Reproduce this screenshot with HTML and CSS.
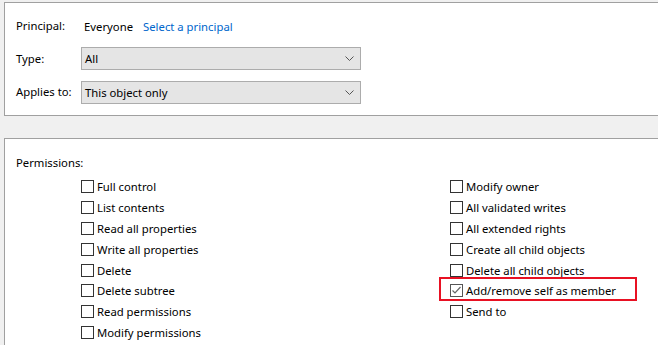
FILE: index.html
```html
<!DOCTYPE html>
<html>
<head>
<meta charset="utf-8">
<link rel="stylesheet" href="styles.css">
</head>
<body>
<div class="panel top">
  <div class="form">
    <div class="label">Principal:</div>
    <div class="value"><span class="who">Everyone</span><a class="link">Select a principal</a></div>
    <div class="label">Type:</div>
    <div class="select"><span>All</span><svg class="chev" width="9" height="5" viewBox="0 0 9 5"><polyline points="0.5,0.5 4.5,4.5 8.5,0.5" fill="none" stroke="#555" stroke-width="1"/></svg></div>
    <div class="label">Applies to:</div>
    <div class="select"><span>This object only</span><svg class="chev" width="9" height="5" viewBox="0 0 9 5"><polyline points="0.5,0.5 4.5,4.5 8.5,0.5" fill="none" stroke="#555" stroke-width="1"/></svg></div>
  </div>
</div>
<div class="panel bottom">
  <div class="perm-label">Permissions:</div>
  <div class="cols">
    <div class="col left">
      <div class="item"><span class="box"></span>Full control</div>
      <div class="item"><span class="box"></span>List contents</div>
      <div class="item"><span class="box"></span>Read all properties</div>
      <div class="item"><span class="box"></span>Write all properties</div>
      <div class="item"><span class="box"></span>Delete</div>
      <div class="item"><span class="box"></span>Delete subtree</div>
      <div class="item"><span class="box"></span>Read permissions</div>
      <div class="item"><span class="box"></span>Modify permissions</div>
    </div>
    <div class="col right">
      <div class="item"><span class="box"></span>Modify owner</div>
      <div class="item"><span class="box"></span>All validated writes</div>
      <div class="item"><span class="box"></span>All extended rights</div>
      <div class="item"><span class="box"></span>Create all child objects</div>
      <div class="item"><span class="box"></span>Delete all child objects</div>
      <div class="item highlight"><span class="box checked"><svg width="11" height="11" viewBox="0 0 11 11"><polyline points="1.5,5.5 4,8 9.5,2" fill="none" stroke="#666" stroke-width="1.2"/></svg></span>Add/remove self as member</div>
      <div class="item"><span class="box"></span>Send to</div>
    </div>
  </div>
</div>
</body>
</html>
```
FILE: styles.css
```css
html, body {
  margin: 0;
  padding: 0;
  background: #f0f0f0;
  font-family: "Noto Sans", "Open Sans", sans-serif;
  font-size: 11.3px;
  color: #000;
  overflow: hidden;
  height: 345px;
}
.panel {
  background: #fff;
  border: 1px solid #a0a0a0;
  border-right: none;
  margin-left: 4px;
}
.top {
  margin-top: 2px;
  height: 112px;
  box-sizing: content-box;
}
.form {
  display: grid;
  grid-template-columns: 65px 280px;
  grid-template-rows: 23px 23px 23px;
  row-gap: 10px;
  padding: 11px 0 0 11px;
  align-items: center;
}
.value {
  display: flex;
  align-items: center;
  gap: 10px;
  padding-left: 3px;
  margin-top: 1px;
}
.link {
  color: #0066cc;
}
.select {
  height: 23px;
  box-sizing: border-box;
  border: 1px solid #acacac;
  background: #e5e5e5;
  display: flex;
  align-items: center;
  justify-content: space-between;
  padding: 0 6px 0 3px;
}
.select:last-child {
  margin-top: 1px;
}
.chev {
  display: block;
}
.bottom {
  margin-top: 22px;
  border-bottom: none;
  height: 206px;
  padding-top: 13px;
}
.perm-label {
  padding-left: 11px;
  height: 21px;
  line-height: 21px;
}
.cols {
  display: flex;
  margin-top: 3px;
  padding-left: 76px;
}
.col.left {
  width: 369px;
}
.item {
  height: 20.9px;
  display: flex;
  align-items: center;
  position: relative;
}
.box {
  width: 13px;
  height: 13px;
  box-sizing: border-box;
  border: 1px solid #333;
  background: #fff;
  margin-right: 3px;
  flex: none;
  display: flex;
  align-items: center;
  justify-content: center;
}
.box.checked {
  border-color: #555;
}
.box svg {
  display: block;
}
.highlight::before {
  content: "";
  position: absolute;
  left: -11px;
  top: -3px;
  width: 198px;
  height: 24px;
  border: 2px solid #e81123;
  box-sizing: border-box;
}
```
